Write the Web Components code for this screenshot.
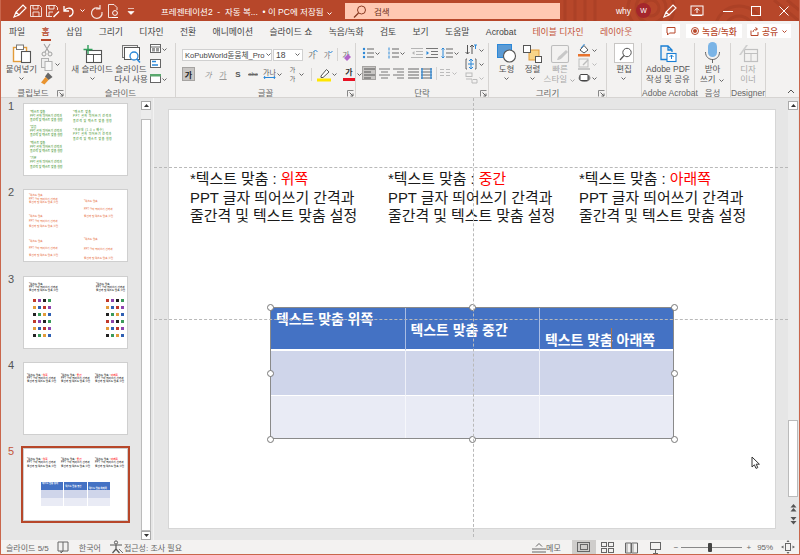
<!DOCTYPE html>
<html lang="ko">
<head>
<meta charset="utf-8">
<title>PowerPoint</title>
<style>
    html, body { margin: 0; padding: 0; background: #e6e6e6; }
    body { font-family: "Liberation Sans", "Noto Sans CJK KR", sans-serif; }
</style>
</head>
<body>
<ppt-app></ppt-app>

<script>
// small helper so each class keeps its own template
function tpl(html) {
    const t = document.createElement('template');
    t.innerHTML = html;
    return t;
}
const FONT = '"Liberation Sans", "Noto Sans CJK KR", sans-serif';

const ICONS = {
    // title bar
    quill: '<path d="M2 14 L4 9 L11 2 L14 5 L7 12 Z M4 9 L7 12 M2 14 L4.5 13" fill="none" stroke="#fff" stroke-width="1.2"/>',
    save: '<path d="M2.5 2.5 H11.5 L13.5 4.5 V13.5 H2.5 Z" fill="none" stroke="#fff" stroke-opacity=".8"/><path d="M5 2.5 V6 H10 V2.5 M5 13.5 V9 H11 V13.5" fill="none" stroke="#fff" stroke-opacity=".8"/>',
    saveas: '<path d="M8 13.5 H2.5 V2.5 H11.5 L13.5 4.5 V7 M5 3 V6 H10 V3 M5 13 V9 H9" fill="none" stroke="#fff" stroke-opacity=".85"/><path d="M9 13.5 L14.5 8 L15.5 9 L10 14.5 Z" fill="#fff"/>',
    undo: '<path d="M4 3 V8 H9 M4.5 7.5 C7 4 13 4.5 13 9 C13 11.5 11 13 9 13.5" fill="none" stroke="#fff" stroke-width="1.3"/>',
    redo: '<path d="M11 2 V6 H7 M10.5 5.5 A5.3 5.3 0 1 0 13 9" fill="none" stroke="#fff" stroke-opacity=".85" stroke-width="1.2"/>',
    fileq: '<path d="M3.5 1.5 H9 L12 4.5 V7 M3.5 1.5 V14.5 H7" fill="none" stroke="#fff" stroke-opacity=".85"/><circle cx="10" cy="10" r="2.4" fill="none" stroke="#fff"/><path d="M7 14.5 H13" stroke="#fff"/>',
    more: '<path d="M4 4.5 H10 M4 7.5 H10 L7 10.5 Z" fill="#fff" stroke="#fff" stroke-opacity=".8" stroke-width=".8"/>',
    search: '<circle cx="9.5" cy="6" r="4" fill="none" stroke="#8a3a22"/><path d="M6.5 9 L2 13.5" stroke="#8a3a22" stroke-width="1.2"/>',
    monitor: '<rect x="2" y="3" width="12" height="9" fill="none" stroke="#fff"/><path d="M8 10 V5.5 M5.8 7.5 L8 5.2 L10.2 7.5" fill="none" stroke="#fff"/><path d="M3 12.5 H13" stroke="#fff"/>',
    // ribbon, clipboard
    paste: '<rect x="1.5" y="3.5" width="13" height="14" fill="#fff" stroke="#e39c3a" stroke-width="1.4"/><rect x="4.5" y="1" width="7" height="4.5" fill="#fff" stroke="#777"/><rect x="9.5" y="7.5" width="9" height="11" fill="#fff" stroke="#555" stroke-width="1.1"/>',
    cut: '<path d="M4 1 L9 9 M10 1 L5 9" stroke="#a0a0a0" stroke-width="1.1"/><circle cx="4" cy="11" r="2" fill="none" stroke="#a0a0a0"/><circle cx="10" cy="11" r="2" fill="none" stroke="#a0a0a0"/>',
    copy: '<rect x="1.5" y="1.5" width="7" height="9" fill="#eee" stroke="#b0b0b0"/><rect x="5" y="4.5" width="7" height="9" fill="#f7f7f7" stroke="#b0b0b0"/>',
    brush: '<path d="M8 1.5 L12.5 6 L8.5 9 L5 5.5 Z" fill="#666"/><path d="M5.5 6 L8.5 9 L4.5 13.5 L1 11.5 Z" fill="#e8932f"/>',
    // slides
    newslide: '<rect x="3.5" y="5.5" width="15" height="12" fill="#fff" stroke="#555" stroke-width="1.1"/><path d="M3.5 9.5 H18.5 M10.5 9.5 V17.5" stroke="#555"/><path d="M5 0 V9 M0.5 4.5 H9.5" stroke="#2f9e5a" stroke-width="1.4"/>',
    reuse: '<rect x="1.5" y="1.5" width="15" height="12" fill="#f3f2f1" stroke="#777"/><rect x="3.5" y="3.5" width="15" height="12" fill="#fff" stroke="#555"/><circle cx="13" cy="12" r="4" fill="#fff" stroke="#2b88d8" stroke-width="1.3"/><path d="M15.8 15 L19 18.5" stroke="#2b88d8" stroke-width="1.6"/>',
    layout: '<rect x=".5" y=".5" width="10" height="8" fill="#fff" stroke="#666"/><path d="M.5 3 H10.5" stroke="#666"/><rect x="2" y="4" width="3" height="3.5" fill="#999"/><rect x="6" y="4" width="3" height="3.5" fill="#999"/>',
    resetsl: '<rect x=".5" y=".5" width="10" height="8" fill="#fff" stroke="#666"/><path d="M2 2.5 H6 M2 6 H8" stroke="#2b88d8" stroke-width="1.3"/>',
    section: '<rect x=".5" y=".5" width="10" height="8" fill="#fff" stroke="#666"/><rect x="0" y="0" width="11" height="2.5" fill="#5aa86e"/>',
    // font
    grow: '<path d="M7.5 3 L9.5 1 L11.5 3" fill="none" stroke="#2b88d8"/>',
    shrink: '<path d="M7.5 1 L9.5 3 L11.5 1" fill="none" stroke="#2b88d8"/>',
    erase: '<path d="M6 9 L10 5 L13 8 L9 12 Z" fill="#b366c9"/>',
    highlight: '<path d="M4 9 L9.5 2.5 L12 5 L6 10.5 H4 Z" fill="#fff" stroke="#555"/><rect x="0" y="11.5" width="14" height="3" fill="#ffe600"/>',
    spacing: '<path d="M0 9.5 H11 M1 8 L0 9.5 L1 11 M10 8 L11 9.5 L10 11" fill="none" stroke="#2b88d8"/>',
    // paragraph
    bullets: '<circle cx="2" cy="2" r="1.2" fill="#2b88d8"/><circle cx="2" cy="6" r="1.2" fill="#2b88d8"/><circle cx="2" cy="10" r="1.2" fill="#2b88d8"/><path d="M5 2 H12 M5 6 H12 M5 10 H12" stroke="#666"/>',
    numbers: '<path d="M2 .5 V3.5 M2 4.5 V7.5 M2 8.5 V11.5" stroke="#2b88d8"/><path d="M5 2 H12 M5 6 H12 M5 10 H12" stroke="#666"/>',
    indentl: '<path d="M0 1.5 H12 M5 4.5 H12 M5 7.5 H12 M0 10.5 H12" stroke="#b5b5b5"/><path d="M3.5 4 L1 6 L3.5 8 Z" fill="#b5b5b5"/>',
    indentr: '<path d="M0 1.5 H12 M5 4.5 H12 M5 7.5 H12 M0 10.5 H12" stroke="#777"/><path d="M.5 4 L3 6 L.5 8 Z" fill="#2b88d8"/>',
    linesp: '<path d="M5 2 H12 M5 6 H12 M5 10 H12" stroke="#666"/><path d="M2 1 V11 M.5 2.5 L2 1 L3.5 2.5 M.5 9.5 L2 11 L3.5 9.5" fill="none" stroke="#2b88d8"/>',
    textdir: '<path d="M2.5 1 V10 M.5 8 L2.5 10 L4.5 8 M7 10 V1 M5 3 L7 1 L9 3" fill="none" stroke="#555"/><path d="M9 1 H12 M10.5 1 V5" stroke="#2b88d8"/>',
    valign: '<path d="M2 1 H1 V11 H2 M10 1 H11 V11 H10" fill="none" stroke="#666"/><path d="M6 1 V11 M4 3 L6 1 L8 3 M4 9 L6 11 L8 9 M3 6 H9" fill="none" stroke="#2b88d8"/>',
    smart: '<rect x="1" y="1" width="6" height="3.5" fill="none" stroke="#bbb"/><path d="M1 7 H7 V11 H12 V7.5 H8" fill="none" stroke="#bbb"/>',
    alignl: '<path d="M0 1 H11 M0 4 H7 M0 7 H11 M0 10 H7" stroke="#555"/>',
    alignc: '<path d="M0 1 H11 M2 4 H9 M0 7 H11 M2 10 H9" stroke="#777"/>',
    alignr: '<path d="M0 1 H11 M4 4 H11 M0 7 H11 M4 10 H11" stroke="#777"/>',
    alignj: '<path d="M0 1 H11 M0 4 H11 M0 7 H11 M0 10 H11" stroke="#666"/>',
    aligndist: '<path d="M0 1 H11 M0 4 H11 M0 7 H11 M0 10 H11" stroke="#666"/><path d="M1 0 V11 M10 0 V11" stroke="#2b88d8" stroke-width="1.3"/>',
    cols: '<path d="M0 1.5 H4 M0 4.5 H4 M0 7.5 H4 M6 1.5 H10 M6 4.5 H10 M6 7.5 H10" stroke="#bbb"/>',
    // drawing
    shapes: '<rect x=".5" y=".5" width="14" height="13" fill="#5b9bd5" stroke="#2b88d8"/><circle cx="12.5" cy="12" r="6" fill="#fff" stroke="#555" stroke-width="1.1"/>',
    arrange: '<rect x="6" y="5" width="10" height="10" fill="#f8d488" stroke="#e39c3a"/><rect x=".5" y=".5" width="7" height="7" fill="#fff" stroke="#555"/><rect x="12.5" y="11.5" width="6" height="6" fill="#fff" stroke="#555"/>',
    quick: '<rect x=".5" y=".5" width="17" height="17" rx="1.5" fill="none" stroke="#bdbdbd" stroke-width="1.1"/><path d="M6 15 C7 12 8 11 9 10.5 L15 5 L17 7 L11 13 C9.5 14.5 8 15 6 15 Z" fill="#c8c8c8"/>',
    fill: '<path d="M2 6 L6 1.5 L10 6 L6 9 Z" fill="#fff" stroke="#555"/><path d="M6.5 0 L3 4" stroke="#2b88d8"/><rect x="0" y="10" width="12" height="2.5" fill="#e8732d"/>',
    outline: '<rect x="1" y="1" width="9" height="8" fill="none" stroke="#bdbdbd"/><path d="M5 7 L10 2" stroke="#bdbdbd" stroke-width="1.5"/><rect x="0" y="10" width="12" height="2" fill="#c8c8c8"/>',
    effects: '<ellipse cx="6.5" cy="6" rx="6" ry="4" fill="#888"/><rect x="2" y="2.5" width="8" height="6" rx="1" fill="#fff" stroke="#444"/>',
    find: '<circle cx="11" cy="7.5" r="4.2" fill="none" stroke="#555"/><path d="M8 10.5 L4 15" stroke="#555" stroke-width="1.2"/>',
    pdf: '<path d="M9 14.5 H2 V1 H9 L13 5 V7 M9 1 V5 H13" fill="none" stroke="#1a7fd4" stroke-width="1.3"/><rect x="8" y="8.5" width="9" height="8" fill="#fff" stroke="#1a7fd4" stroke-width="1.1"/><path d="M12.5 14 V10 M10.5 12 L12.5 10 L14.5 12" fill="none" stroke="#1a7fd4"/>',
    mic: '<rect x="4" y="0" width="9" height="15" rx="4.5" fill="#7ab4e6"/><path d="M1.5 10 C1.5 20 15.5 20 15.5 10 M8.5 17 V21" fill="none" stroke="#666"/>',
    design: '<rect x="5.5" y="4.5" width="13" height="12" fill="none" stroke="#c0c0c0" stroke-width="1.2"/><path d="M5.5 8.5 H18.5 M12 8.5 V16.5" stroke="#c0c0c0"/><path d="M0 10 L7 0 L9 0 L2 10 Z" fill="#cfcfcf"/>',
    launcher: '<path d="M.5 6.5 V.5 H6.5" fill="none" stroke="#888"/><path d="M2.5 2.5 L6 6 M6 3.5 V6 H3.5" fill="none" stroke="#666"/>',
    // status bar
    book: '<path d="M2 2 H7 V11 H2 Z M7 2 H12 V11 H7 M5 11 V13 L7 11" fill="none" stroke="#666"/>',
    access: '<circle cx="7" cy="2.5" r="1.6" fill="none" stroke="#555"/><path d="M1 5 H13 M7 5 V9 M7 9 L3.5 13 M7 9 L10.5 13" fill="none" stroke="#555" stroke-width="1.2"/><path d="M10 9 L14 13" stroke="#777"/>',
    notes: '<path d="M0 9 H14 M0 12 H14" stroke="#666"/><path d="M4 6.5 L7 3.5 L10 6.5" fill="none" stroke="#666"/>',
    normal: '<rect x=".5" y="1.5" width="12" height="9" fill="none" stroke="#666"/><rect x="3.5" y="3.5" width="7" height="5" fill="none" stroke="#666"/>',
    sorter: '<rect x=".5" y="1.5" width="5" height="4" fill="none" stroke="#666"/><rect x="7.5" y="1.5" width="5" height="4" fill="none" stroke="#666"/><rect x=".5" y="7.5" width="5" height="4" fill="none" stroke="#666"/><rect x="7.5" y="7.5" width="5" height="4" fill="none" stroke="#666"/>',
    reading: '<path d="M.5 2 H6 V12 H.5 Z M6.5 2 H12.5 V12 H6.5 Z" fill="none" stroke="#666"/><path d="M2 2 V12 M8 2 V12" stroke="#999"/>',
    show: '<rect x="1.5" y="1.5" width="10" height="7" fill="none" stroke="#666"/><path d="M6.5 8.5 V12 M4 12.5 H9" stroke="#666"/>',
    fit: '<rect x="4.5" y="3.5" width="5" height="7" fill="none" stroke="#666"/><path d="M7 0 L5.5 2 H8.5 Z M7 14 L5.5 12 H8.5 Z M0 7 L2.5 5.5 V8.5 Z M14 7 L11.5 5.5 V8.5 Z" fill="#666"/>'
};

class RbIcon extends HTMLElement {
    connectedCallback() {
        const w = this.getAttribute('w') || 14;
        const h = this.getAttribute('h') || w;
        this.attachShadow({ mode: 'open' }).innerHTML = `
            <style>:host { display: inline-flex; flex: none; } svg { display: block; overflow: visible; }</style>
            <svg width="${w}" height="${h}" viewBox="0 0 ${w} ${h}">${ICONS[this.getAttribute('name')] || ''}</svg>`;
    }
}
customElements.define('rb-icon', RbIcon);

class RbCaret extends HTMLElement {
    constructor() {
        super();
        this.attachShadow({ mode: 'open' }).innerHTML = `
            <style>:host { display: inline-flex; flex: none; align-items: center; justify-content: center; width: 7px; height: 5px; }</style>
            <svg width="5" height="3" viewBox="0 0 5 3"><path d="M.5 .5 L2.5 2.5 L4.5 .5" fill="none" stroke="var(--caret, #666)"/></svg>`;
    }
}
customElements.define('rb-caret', RbCaret);

// title bar
const titleTemplate = tpl(`
    <style>
        :host {
            display: flex; align-items: center; position: relative; overflow: hidden;
            height: 21px; background: #b7472a; color: #fff; font: 8.5px ${FONT}; flex: none;
        }
        .deco { position: absolute; right: 0; top: 0; }
        .qa { display: flex; align-items: center; margin-left: 11px; position: relative; }
        .name { margin-left: 23px; width: 184px; white-space: pre; position: relative; }
        .search {
            width: 215px; height: 16px; background: #ffc8b2; color: #6b3020; display: flex; align-items: center;
            padding-left: 7px; box-sizing: border-box; gap: 8px; position: relative; font-size: 8.5px;
        }
        .right { display: flex; align-items: center; margin-left: auto; position: relative; }
        .who { margin-right: 5px; }
        .avatar {
            width: 15px; height: 15px; border-radius: 50%; background: #a4262c; font-size: 7px;
            display: flex; align-items: center; justify-content: center; margin-right: 11px;
        }
        .win { width: 28px; display: flex; justify-content: center; }
        rb-caret { --caret: #fff; }
    </style>
    <svg class="deco" width="240" height="21" viewBox="0 0 240 21" fill="none" stroke="#ac4126" stroke-width="3">
        <path d="M6 0 V21 M16 0 V21 M26 0 V21 M36 0 V21"/>
        <circle cx="92" cy="8" r="8"/><circle cx="92" cy="8" r="15"/><circle cx="92" cy="8" r="23"/>
        <circle cx="180" cy="30" r="14"/><circle cx="180" cy="30" r="24"/><path d="M215 0 L240 21 M228 0 L240 10"/>
    </svg>
    <div class="qa">
        <rb-icon name="quill" w="16"></rb-icon>
        <rb-icon name="save" w="16"></rb-icon>
        <rb-icon name="saveas" w="16"></rb-icon>
        <rb-icon name="undo" w="16"></rb-icon><rb-caret style="margin:0 3px"></rb-caret>
        <rb-icon name="redo" w="16"></rb-icon>
        <rb-icon name="fileq" w="16"></rb-icon>
        <rb-icon name="more" w="14" style="margin-left:3px"></rb-icon>
    </div>
    <div class="name">프레젠테이션2  -  자동 복...  • 이 PC에 저장됨 <rb-caret></rb-caret></div>
    <div class="search"><rb-icon name="search" w="14"></rb-icon>검색</div>
    <div class="right">
        <span class="who">why</span>
        <div class="avatar">W</div>
        <rb-icon name="quill" w="16" style="margin-right:11px"></rb-icon>
        <rb-icon name="monitor" w="16" style="margin-right:9px"></rb-icon>
        <div class="win"><svg width="10" height="10"><path d="M0 5.5 H10" stroke="#fff"/></svg></div>
        <div class="win"><svg width="10" height="10"><rect x=".5" y=".5" width="9" height="9" fill="none" stroke="#fff"/></svg></div>
        <div class="win" style="margin-right:1px"><svg width="10" height="10"><path d="M.5 .5 L9.5 9.5 M9.5 .5 L.5 9.5" stroke="#fff"/></svg></div>
    </div>
`);
class PptTitle extends HTMLElement {
    constructor() {
        super();
        this.attachShadow({ mode: 'open' }).appendChild(titleTemplate.content.cloneNode(true));
    }
}
customElements.define('ppt-title', PptTitle);

// tab strip
const tabsTemplate = tpl(`
    <style>
        :host {
            display: flex; align-items: center; height: 21px; background: #f3f2f1; flex: none;
            font: 8.8px ${FONT}; color: #444; padding-left: 8px; gap: 16.4px; position: relative;
        }
        .home { color: #b7472a; position: relative; font-weight: 500; }
        .home::after { content: ""; position: absolute; left: -1px; right: -1px; bottom: -3px; height: 2px; background: #b7472a; }
        .ctx { color: #c4553a; }
        .btns { position: absolute; right: 8px; top: 3px; display: flex; gap: 5px; }
        .btn {
            height: 14px; background: #fff; display: flex; align-items: center; justify-content: center; gap: 3px;
            color: #b7472a; font-weight: 500; box-sizing: border-box;
        }
        .rec { width: 56px; }
        .share { width: 44px; }
        .chat { width: 18px; margin-right: 1px; }
        rb-caret { --caret: #b7472a; }
    </style>
    <span>파일</span><span class="home">홈</span><span>삽입</span><span>그리기</span><span>디자인</span><span>전환</span>
    <span>애니메이션</span><span>슬라이드 쇼</span><span>녹음/녹화</span><span>검토</span><span>보기</span><span>도움말</span>
    <span>Acrobat</span><span class="ctx">테이블 디자인</span><span class="ctx">레이아웃</span>
    <div class="btns">
        <div class="btn chat"><svg width="10" height="9"><path d="M1 .5 H9 V6 H3.5 L1.5 8 V6 H1 Z" fill="none" stroke="#b7472a"/></svg></div>
        <div class="btn rec"><svg width="8" height="8"><circle cx="4" cy="4" r="3.5" fill="none" stroke="#b7472a"/><circle cx="4" cy="4" r="2" fill="#b7472a"/></svg>녹음/녹화</div>
        <div class="btn share"><svg width="9" height="9"><path d="M1 3.5 V8.5 H8 V5 M3 5 C3 3 5 2 7 2 M5.5 .5 L7.5 2 L5.5 3.5" fill="none" stroke="#b7472a"/></svg>공유 <rb-caret></rb-caret></div>
    </div>
`);
class PptTabs extends HTMLElement {
    constructor() {
        super();
        this.attachShadow({ mode: 'open' }).appendChild(tabsTemplate.content.cloneNode(true));
    }
}
customElements.define('ppt-tabs', PptTabs);

// one group of the ribbon: content in the slot, name and dialog launcher below
class RbGroup extends HTMLElement {
    connectedCallback() {
        const launcher = this.hasAttribute('launcher')
            ? '<rb-icon class="launch" name="launcher" w="7"></rb-icon>' : '';
        this.attachShadow({ mode: 'open' }).innerHTML = `
            <style>
                :host {
                    display: flex; flex-direction: column; flex: none; box-sizing: border-box; height: 55px;
                    width: ${this.getAttribute('w')}px; border-right: 1px solid #d6d4d2;
                }
                .body { flex: 1; display: flex; min-height: 0; }
                .label { height: 12px; line-height: 15px; text-align: center; color: #666; font-size: 8.5px; position: relative; white-space: nowrap; }
                .launch { position: absolute; right: 1px; top: 4px; }
            </style>
            <div class="body"><slot></slot></div>
            <div class="label">${this.getAttribute('label')}${launcher}</div>`;
    }
}
customElements.define('rb-group', RbGroup);

// big ribbon button: icon above, one or two lines of text
class RbBig extends HTMLElement {
    connectedCallback() {
        const caret = this.hasAttribute('caret') ? '<rb-caret></rb-caret>' : '';
        this.attachShadow({ mode: 'open' }).innerHTML = `
            <style>
                :host {
                    display: flex; flex-direction: column; align-items: center; flex: none;
                    width: ${this.getAttribute('w') || 40}px; color: ${this.hasAttribute('off') ? '#aaa' : '#555'};
                    --caret: ${this.hasAttribute('off') ? '#aaa' : '#666'};
                    font-size: 8.5px; line-height: 10px; text-align: center; white-space: nowrap;
                }
                .ico { height: 20px; display: flex; align-items: flex-end; justify-content: center; width: 100%; }
                .txt { display: flex; flex-direction: column; align-items: center; padding-top: 1px; }
                rb-caret { margin-top: 2px; }
            </style>
            <div class="ico"><slot name="icon"></slot></div>
            <div class="txt"><slot></slot>${caret}</div>`;
    }
}
customElements.define('rb-big', RbBig);

// small ribbon button: icon and optional caret
class RbSmall extends HTMLElement {
    connectedCallback() {
        const caret = this.hasAttribute('caret') ? '<rb-caret></rb-caret>' : '';
        const w = this.getAttribute('w');
        this.attachShadow({ mode: 'open' }).innerHTML = `
            <style>
                :host {
                    display: flex; align-items: center; flex: none; height: 14px; color: #666;
                    ${w ? `width:${w}px;` : ''}
                }
                :host([on]) { background: #c8c6c4; box-shadow: inset 0 0 0 1px #a5a3a1; justify-content: center; color: #222; }
                :host([off]) { --caret: #bbb; }
            </style>
            <slot></slot>${caret}`;
    }
}
customElements.define('rb-small', RbSmall);

// everything in the home ribbon
const ribbonTemplate = tpl(`
    <style>
        :host {
            display: flex; flex: none; height: 56px; background: #f3f2f1; position: relative;
            font: 8.5px ${FONT}; color: #555; border-bottom: 1px solid #d6d4d2; box-sizing: border-box; padding-top: 1px;
        }
        .col { display: flex; flex-direction: column; }
        .row { display: flex; align-items: center; }
        .combo {
            height: 12px; background: #fff; border: 1px solid #d0d0d0; box-sizing: border-box; display: flex;
            align-items: center; justify-content: space-between; padding: 0 1px 0 2px; font-size: 7.6px; color: #444; white-space: nowrap; overflow: hidden;
        }
        .g { font-size: 8px; color: #777; text-align: center; font-weight: 400; }
        .box { width: 20px; height: 20px; background: #fff; border: 1px solid #c8c6c4; display: flex; align-items: center; justify-content: center; box-sizing: border-box; }
        .collapse { position: absolute; right: 4px; bottom: 3px; }
        .sep { width: 1px; height: 13px; background: #d6d4d2; }
        .bar { display: block; }
    </style>
    <rb-group w="65" label="클립보드" launcher>
        <rb-big w="35" caret style="margin-left:3px"><rb-icon slot="icon" name="paste" w="20" h="19"></rb-icon>붙여넣기</rb-big>
        <div class="col">
            <rb-small style="padding-left:1px"><rb-icon name="cut" w="14"></rb-icon></rb-small>
            <rb-small caret style="padding-left:1px"><rb-icon name="copy" w="14"></rb-icon></rb-small>
            <rb-small style="padding-left:1px"><rb-icon name="brush" w="14"></rb-icon></rb-small>
        </div>
    </rb-group>
    <rb-group w="110" label="슬라이드">
        <rb-big w="46" caret style="margin-left:3px"><rb-icon slot="icon" name="newslide" w="19" h="18"></rb-icon>새 슬라이드</rb-big>
        <rb-big w="32"><rb-icon slot="icon" name="reuse" w="20" h="19"></rb-icon>슬라이드<br>다시 사용</rb-big>
        <div class="col" style="padding:0 0 0 3px;gap:1px;margin-top:-1px">
            <rb-small caret><rb-icon name="layout" w="11" h="10"></rb-icon></rb-small>
            <rb-small><rb-icon name="resetsl" w="11" h="10"></rb-icon></rb-small>
            <rb-small caret><rb-icon name="section" w="11" h="10"></rb-icon></rb-small>
        </div>
    </rb-group>
    <rb-group w="180" label="글꼴" launcher>
        <div class="col" style="padding:5px 0 0 6px;gap:6px">
            <div class="row">
                <div class="combo" style="width:90px"><span>KoPubWorld돋움체_Pro</span><rb-caret></rb-caret></div>
                <div class="combo" style="width:30px;margin-left:1px;font-size:8.5px"><span>18</span><rb-caret></rb-caret></div>
                <span class="g" style="width:10px;margin-left:4px;position:relative">가<rb-icon name="grow" w="12" h="4" style="position:absolute;left:-1px;top:0"></rb-icon></span>
                <span class="g" style="width:10px;margin-left:5px;font-size:7px;position:relative">가<rb-icon name="shrink" w="12" h="4" style="position:absolute;left:-1px;top:0"></rb-icon></span>
                <span class="sep" style="margin-left:5px"></span>
                <span class="g" style="width:10px;margin-left:3px;position:relative">가<rb-icon name="erase" w="14" style="position:absolute;left:-3px;top:0"></rb-icon></span>
            </div>
            <div class="row">
                <rb-small on w="13"><span style="font-weight:700;font-size:8px">가</span></rb-small>
                <span class="g" style="width:8px;margin-left:9px;font-style:italic;color:#999">가</span>
                <span class="g" style="width:8px;margin-left:7px;text-decoration:underline;color:#999">가</span>
                <span class="g" style="width:8px;margin-left:7px;font-weight:700;color:#555">S</span>
                <span class="g" style="width:12px;margin-left:5px;text-decoration:line-through;font-size:6px;color:#666">abc</span>
                <rb-small caret style="margin-left:4px;position:relative"><span class="g" style="width:13px;font-size:7px;line-height:8px;margin-top:-3px;color:#555">가나</span><rb-icon name="spacing" w="11" h="12" style="position:absolute;left:1px;top:1px"></rb-icon></rb-small>
                <rb-small caret style="margin-left:4px"><span class="g" style="width:11px;font-size:6px;color:#555">가가</span></rb-small>
                <span class="sep" style="margin-left:6px"></span>
                <rb-small caret style="margin-left:5px"><rb-icon name="highlight" w="14" h="14"></rb-icon></rb-small>
                <rb-small caret style="margin-left:4px"><span style="display:flex;flex-direction:column;align-items:center;width:14px;line-height:10px;font-size:8px;font-weight:700;color:#333">가<svg class="bar" width="12" height="3"><rect width="12" height="3" fill="#e81123"></rect></svg></span></rb-small>
            </div>
        </div>
    </rb-group>
    <rb-group w="133" label="단락" launcher>
        <div class="col" style="padding:3px 0 0 6px;gap:6px;width:103px">
            <div class="row">
                <rb-small caret w="25"><rb-icon name="bullets" w="12"></rb-icon></rb-small>
                <rb-small caret w="24"><rb-icon name="numbers" w="12"></rb-icon></rb-small>
                <rb-small w="15"><rb-icon name="indentl" w="12"></rb-icon></rb-small>
                <rb-small w="15"><rb-icon name="indentr" w="12"></rb-icon></rb-small>
                <rb-small caret w="22"><rb-icon name="linesp" w="12"></rb-icon></rb-small>
            </div>
            <div class="row">
                <rb-small on w="14"><rb-icon name="alignl" w="11" h="11"></rb-icon></rb-small>
                <rb-small w="15" style="padding-left:3px;box-sizing:border-box"><rb-icon name="alignc" w="11" h="11"></rb-icon></rb-small>
                <rb-small w="15" style="padding-left:2px;box-sizing:border-box"><rb-icon name="alignr" w="11" h="11"></rb-icon></rb-small>
                <rb-small w="15" style="padding-left:2px;box-sizing:border-box"><rb-icon name="alignj" w="11" h="11"></rb-icon></rb-small>
                <rb-small w="13"><rb-icon name="aligndist" w="11" h="11"></rb-icon></rb-small>
                <span class="sep" style="margin:0 3px 0 2px"></span>
                <rb-small caret w="20" off><rb-icon name="cols" w="11" h="11"></rb-icon></rb-small>
            </div>
        </div>
        <div class="col">
            <rb-small caret><rb-icon name="textdir" w="13" h="12"></rb-icon></rb-small>
            <rb-small caret><rb-icon name="valign" w="13" h="12"></rb-icon></rb-small>
            <rb-small caret off><rb-icon name="smart" w="13" h="12"></rb-icon></rb-small>
        </div>
    </rb-group>
    <rb-group w="118" label="그리기" launcher>
        <rb-big w="27" caret style="margin-left:4px"><rb-icon slot="icon" name="shapes" w="19" h="19"></rb-icon>도형</rb-big>
        <rb-big w="25" caret><rb-icon slot="icon" name="arrange" w="19" h="18"></rb-icon>정렬</rb-big>
        <rb-big w="30" off><rb-icon slot="icon" name="quick" w="18" h="18"></rb-icon>빠른<br><span>스타일 <rb-caret></rb-caret></span></rb-big>
        <div class="col" style="padding:0 0 0 3px">
            <rb-small caret><rb-icon name="fill" w="13" h="13"></rb-icon></rb-small>
            <rb-small caret off><rb-icon name="outline" w="13" h="13"></rb-icon></rb-small>
            <rb-small caret><rb-icon name="effects" w="13" h="13"></rb-icon></rb-small>
        </div>
    </rb-group>
    <rb-group w="35" label="">
        <rb-big w="34" caret>
            <div slot="icon" class="box"><rb-icon name="find" w="16"></rb-icon></div>
            <span>편집</span>
        </rb-big>
    </rb-group>
    <rb-group w="53" label="Adobe Acrobat">
        <rb-big w="52"><rb-icon slot="icon" name="pdf" w="18" h="18"></rb-icon>Adobe PDF<br>작성 및 공유</rb-big>
    </rb-group>
    <rb-group w="36" label="음성">
        <rb-big w="35"><rb-icon slot="icon" name="mic" w="17" h="21"></rb-icon>받아<br><span>쓰기 <rb-caret></rb-caret></span></rb-big>
    </rb-group>
    <rb-group w="35" label="Designer">
        <rb-big w="34" off><rb-icon slot="icon" name="design" w="19" h="18"></rb-icon>디자<br>이너</rb-big>
    </rb-group>
    <svg class="collapse" width="8" height="5"><path d="M1 4 L4 1 L7 4" fill="none" stroke="#555"/></svg>
`);
class PptRibbon extends HTMLElement {
    constructor() {
        super();
        this.attachShadow({ mode: 'open' }).appendChild(ribbonTemplate.content.cloneNode(true));
    }
}
customElements.define('ppt-ribbon', PptRibbon);

// vertical scrollbar; the slot fills the lower end
const scrollTemplate = tpl(`
    <style>
        :host { display: flex; flex-direction: column; box-sizing: border-box; width: 10px; background: #e6e6e6; flex: none; }
        .arrow {
            height: 9px; background: #fff; border: 1px solid #aaa; box-sizing: border-box; flex: none;
            display: flex; align-items: center; justify-content: center;
        }
        .gap { flex: none; height: calc(var(--before, 0) * 1px); background: #ececec; }
        .thumb { flex: none; height: calc(var(--size, 1) * 1px); background: #fff; border: 1px solid #bbb; box-sizing: border-box; }
        .after { flex: 1; display: flex; flex-direction: column; justify-content: flex-end; }
    </style>
    <div class="arrow"><svg width="5" height="3"><path d="M2.5 0 L5 3 H0 Z" fill="#333"/></svg></div>
    <div class="gap"></div>
    <div class="thumb"></div>
    <div class="after"><slot></slot></div>
`);
class PptScroll extends HTMLElement {
    constructor() {
        super();
        this.attachShadow({ mode: 'open' }).appendChild(scrollTemplate.content.cloneNode(true));
    }
}
customElements.define('ppt-scroll', PptScroll);

// text on a thumbnail, which is a free canvas
class MiniText extends HTMLElement {
    connectedCallback() {
        this.attachShadow({ mode: 'open' }).innerHTML = `
            <style>
                :host {
                    position: absolute; left: ${this.getAttribute('x')}px; top: ${this.getAttribute('y')}px;
                    font-size: ${this.getAttribute('fs') || 2.6}px; line-height: ${this.getAttribute('lh') || 3.3}px; white-space: nowrap;
                    letter-spacing: ${this.getAttribute('ls') || 0}px; font-weight: 500;
                    color: ${this.getAttribute('color') || '#222'}; font-family: ${FONT};
                }
            </style><slot></slot>`;
    }
}
customElements.define('mini-text', MiniText);

class SlideThumb extends HTMLElement {
    connectedCallback() {
        this.attachShadow({ mode: 'open' }).innerHTML = `
            <style>
                :host { display: flex; height: 73px; }
                .num { width: 22px; padding-left: 7px; box-sizing: border-box; font-size: 11px; line-height: 7px; color: #555; }
                :host([active]) .num { color: #c4553a; }
                .page { position: relative; width: 105px; height: 73px; box-sizing: border-box; background: #fff; border: 1px solid #cfcfcf; overflow: hidden; }
                .wrap { position: relative; }
                :host([active]) .wrap::after {
                    content: ""; position: absolute; left: -2px; top: -2px; width: 109px; height: 77px;
                    border: 2px solid #b7472a; box-sizing: border-box;
                }
            </style>
            <div class="num">${this.getAttribute('num')}</div>
            <div class="wrap"><div class="page"><slot></slot></div></div>`;
    }
}
customElements.define('slide-thumb', SlideThumb);

// little colour swatch rows in thumbnail 3
class MiniDots extends HTMLElement {
    connectedCallback() {
        const colors = ['#c0392b', '#2f5fb3', '#e39c3a', '#3a9a5a', '#222', '#8e44ad'];
        let dots = '';
        for (let i = 0; i < 24; i++) dots += `<i style="background:${colors[(i * 5) % 6]}"></i>`;
        this.attachShadow({ mode: 'open' }).innerHTML = `
            <style>
                :host {
                    position: absolute; left: ${this.getAttribute('x')}px; top: ${this.getAttribute('y')}px;
                    display: grid; grid-template-columns: repeat(4, 3px); gap: 4px 2px;
                }
                i { display: block; width: 3px; height: 3px; }
            </style>${dots}`;
    }
}
customElements.define('mini-dots', MiniDots);

class MiniTable extends HTMLElement {
    constructor() {
        super();
        this.attachShadow({ mode: 'open' }).innerHTML = `
            <style>
                :host {
                    position: absolute; left: 17px; top: 33px; width: 70px; height: 24px;
                    display: grid; grid-template-columns: repeat(3, 1fr); grid-template-rows: 8px 8px 8px;
                    font: 700 2.3px/3px ${FONT}; color: #fff; white-space: nowrap;
                }
                div { background: #4472c4; border-right: .3px solid #fff; padding: 0 1px; overflow: hidden; }
                .a { background: #cfd5ea; } .b { background: #e9ebf5; }
            </style>
            <div>텍스트 맞춤 위쪽</div><div style="padding-top:2.5px">텍스트 맞춤 중간</div><div style="padding-top:5px">텍스트 맞춤 아래쪽</div>
            <div class="a"></div><div class="a"></div><div class="a"></div>
            <div class="b"></div><div class="b"></div><div class="b"></div>`;
    }
}
customElements.define('mini-table', MiniTable);

const BODY = 'PPT 글자 띄어쓰기 간격과<br>줄간격 및 텍스트 맞춤 설정';
function alignBlocks(y) {
    return [['위쪽', 3], ['중간', 37], ['아래쪽', 71]].map(([w, x]) =>
        `<mini-text x="${x}" y="${y}">*텍스트 맞춤 : <span style="color:#f00">${w}</span><br>${BODY}</mini-text>`).join('');
}

const thumbsTemplate = tpl(`
    <style>
        :host { display: flex; flex-direction: column; gap: 13.25px; padding-top: 5px; box-sizing: border-box; width: 140px; overflow: hidden; background: #e6e6e6; flex: none; }
    </style>
    <slide-thumb num="1">
        <mini-text x="6" y="6" color="#4f9a3a" fs="2.9" lh="4">*텍스트 맞춤<br>${BODY}</mini-text>
        <mini-text x="6" y="21" color="#4f9a3a" fs="2.9" lh="4">*없음<br>${BODY}</mini-text>
        <mini-text x="6" y="37" color="#4f9a3a" fs="2.9" lh="4">*텍스트 맞춤<br>${BODY}</mini-text>
        <mini-text x="6" y="52" color="#4f9a3a" fs="2.9" lh="4.4">*기본<br>${BODY}</mini-text>
        <mini-text x="49" y="6" color="#4f9a3a" fs="2.9" lh="4.4" ls=".45">*텍스트 맞춤<br>${BODY}</mini-text>
        <mini-text x="49" y="24" color="#4f9a3a" fs="2.9" lh="4.4" ls=".45">*가운데 (1.0 x 배수)<br>${BODY}</mini-text>
    </slide-thumb>
    <slide-thumb num="2">
        <mini-text x="5" y="4" color="#e8754a">*텍스트 맞춤<br>${BODY}</mini-text>
        <mini-text x="5" y="24" color="#e8754a" lh="5">*텍스트 맞춤<br>${BODY}</mini-text>
        <mini-text x="5" y="49" color="#e8754a" lh="6.7">*텍스트 맞춤<br>${BODY}</mini-text>
        <mini-text x="60" y="8" color="#e8754a" lh="7.5">*텍스트 맞춤<br>${BODY}</mini-text>
        <mini-text x="60" y="45" color="#e8754a" lh="9.5">*텍스트 맞춤<br>${BODY}</mini-text>
    </slide-thumb>
    <slide-thumb num="3">
        <mini-text x="5" y="6">*텍스트 맞춤<br>${BODY}</mini-text>
        <mini-text x="72" y="6">*텍스트 맞춤<br>${BODY}</mini-text>
        <mini-dots x="9" y="22"></mini-dots>
        <mini-dots x="82" y="22"></mini-dots>
    </slide-thumb>
    <slide-thumb num="4">${alignBlocks(11)}</slide-thumb>
    <slide-thumb num="5" active>${alignBlocks(9)}<mini-table></mini-table></slide-thumb>
`);
class PptThumbs extends HTMLElement {
    constructor() {
        super();
        this.attachShadow({ mode: 'open' }).appendChild(thumbsTemplate.content.cloneNode(true));
    }
}
customElements.define('ppt-thumbs', PptThumbs);

// text box placed on the slide canvas
class SlideText extends HTMLElement {
    connectedCallback() {
        this.attachShadow({ mode: 'open' }).innerHTML = `
            <style>
                :host {
                    position: absolute; left: ${this.getAttribute('x')}px; top: 60px; white-space: nowrap;
                    font: 14.9px/18.6px ${FONT}; color: #1a1a1a;
                }
                b { font-weight: 400; color: #f00; }
            </style>
            *텍스트 맞춤 : <b>${this.getAttribute('where')}</b><br>
            PPT 글자 띄어쓰기 간격과<br>줄간격 및 텍스트 맞춤 설정`;
    }
}
customElements.define('slide-text', SlideText);

// selected table with its sizing handles
const tableTemplate = tpl(`
    <style>
        :host {
            position: absolute; left: 101px; top: 197px; width: 404px; height: 132px; box-sizing: border-box;
            font: 700 13.9px/16px ${FONT}; color: #fff;
        }
        .grid {
            display: grid; grid-template-columns: 134.5px 134.5px 1fr; grid-template-rows: 43px 45px 1fr;
            height: 100%; box-sizing: border-box; border: 1px solid #8a8a8a; white-space: nowrap;
        }
        .c { border-right: 1px solid #fff; box-sizing: border-box; padding: 0 5px; display: flex; }
        .c:nth-child(3n) { border-right: 0; }
        .h { background: #4472c4; border-right-color: #a9bce3; border-bottom: 2px solid #fff; }
        .a { background: #cfd5ea; border-bottom: 1px solid #fff; border-right-color: #eef0f8; }
        .b { background: #e9ebf5; border-right-color: #f6f7fb; }
        .caret { position: absolute; left: 341px; top: 21px; width: 1px; height: 21px; background: #a8764a; }
        i {
            position: absolute; width: 7px; height: 7px; border-radius: 50%; background: #fff; border: 1px solid #777;
            box-sizing: border-box; margin: -3.5px 0 0 -3.5px;
        }
    </style>
    <div class="grid">
        <div class="c h" style="align-items:flex-start;padding-top:3px">텍스트 맞춤 위쪽</div>
        <div class="c h" style="align-items:center;padding-top:2px">텍스트 맞춤 중간</div>
        <div class="c h" style="align-items:flex-end;padding-bottom:1px">텍스트 맞춤 아래쪽</div>
        <div class="c a"></div><div class="c a"></div><div class="c a"></div>
        <div class="c b"></div><div class="c b"></div><div class="c b"></div>
    </div>
    <div class="caret"></div>
    <i style="left:0;top:0"></i><i style="left:50%;top:0"></i><i style="left:100%;top:0"></i>
    <i style="left:0;top:50%"></i><i style="left:100%;top:50%"></i>
    <i style="left:0;top:100%"></i><i style="left:50%;top:100%"></i><i style="left:100%;top:100%"></i>
`);
class SlideTable extends HTMLElement {
    constructor() {
        super();
        this.attachShadow({ mode: 'open' }).appendChild(tableTemplate.content.cloneNode(true));
    }
}
customElements.define('slide-table', SlideTable);

// the edit pane: gray area, white slide, drawing guides over it
const canvasTemplate = tpl(`
    <style>
        :host { display: block; position: relative; flex: 1; background: #e6e6e6; padding: 12px 0 0 15px; box-sizing: border-box; overflow: hidden; border-left: 1px solid #f2f2f2; }
        .slide { position: relative; width: 606px; height: 418px; background: #fff; box-shadow: 0 0 0 1px #d6d6d6; }
        .gh { position: absolute; left: 0; right: 0; height: 0; border-top: 1px dashed #b9b9b9; }
        .gv { position: absolute; top: 0; bottom: 3px; left: 319px; width: 0; border-left: 1px dashed #b9b9b9; }
        .pointer { position: absolute; left: 597px; top: 358px; }
    </style>
    <div class="slide">
        <slide-text x="21" where="위쪽"></slide-text>
        <slide-text x="219" where="중간"></slide-text>
        <slide-text x="410" where="아래쪽"></slide-text>
        <slide-table></slide-table>
    </div>
    <div class="gh" style="top:69px"></div>
    <div class="gh" style="top:221px"></div>
    <div class="gv"></div>
    <svg class="pointer" width="10" height="14"><path d="M1 1 V11 L3.4 8.8 L5 12.4 L6.8 11.6 L5.2 8.2 H8.4 Z" fill="#fff" stroke="#333"/></svg>
`);
class PptCanvas extends HTMLElement {
    constructor() {
        super();
        this.attachShadow({ mode: 'open' }).appendChild(canvasTemplate.content.cloneNode(true));
    }
}
customElements.define('ppt-canvas', PptCanvas);

// status bar
const statusTemplate = tpl(`
    <style>
        :host {
            display: flex; align-items: center; height: 14px; flex: none; background: #f3f2f1; color: #666;
            font: 8px ${FONT}; padding-left: 5px; box-sizing: border-box; white-space: nowrap;
        }
        .view { width: 24px; height: 14px; display: flex; align-items: center; justify-content: center; }
        .view.on { background: #cfcdcb; }
        .slider { width: 61px; height: 1px; background: #888; position: relative; margin: 0 4px 0 3px; }
        .slider::after { content: ""; position: absolute; left: 27px; top: -4px; width: 4px; height: 9px; background: #444; border-radius: 1px; }
    </style>
    <span>슬라이드 5/5</span>
    <rb-icon name="book" w="14" style="margin-left:7px"></rb-icon>
    <span style="margin-left:9px">한국어</span>
    <rb-icon name="access" w="14" style="margin-left:8px"></rb-icon>
    <span style="margin-left:1px">접근성: 조사 필요</span>
    <rb-icon name="notes" w="14" style="margin-left:350px"></rb-icon>
    <span>메모</span>
    <div class="view on" style="margin-left:11px"><rb-icon name="normal" w="13"></rb-icon></div>
    <div class="view"><rb-icon name="sorter" w="13"></rb-icon></div>
    <div class="view"><rb-icon name="reading" w="13"></rb-icon></div>
    <div class="view"><rb-icon name="show" w="13"></rb-icon></div>
    <span style="margin-left:6px">−</span>
    <div class="slider"></div>
    <span>+</span>
    <span style="margin-left:6px">95%</span>
    <rb-icon name="fit" w="14" style="margin-left:8px"></rb-icon>
`);
class PptStatus extends HTMLElement {
    constructor() {
        super();
        this.attachShadow({ mode: 'open' }).appendChild(statusTemplate.content.cloneNode(true));
    }
}
customElements.define('ppt-status', PptStatus);

// the whole window
const appTemplate = tpl(`
    <style>
        :host {
            display: flex; flex-direction: column; width: 800px; height: 555px; box-sizing: border-box;
            border: 1px solid #c9664c; border-top: 0; overflow: hidden; font-family: ${FONT};
        }
        .main { flex: 1; display: flex; min-height: 0; background: #e6e6e6; }
        .side { padding: 3px 2px 0 0; display: flex; box-sizing: border-box; flex: none; }
        .down {
            height: 9px; background: #fff; border: 1px solid #aaa; box-sizing: border-box;
            display: flex; align-items: center; justify-content: center;
        }
        .nav { display: flex; flex-direction: column; gap: 5px; padding: 0 0 15px; align-items: center; }
    </style>
    <ppt-title></ppt-title>
    <ppt-tabs></ppt-tabs>
    <ppt-ribbon></ppt-ribbon>
    <div class="main">
        <ppt-thumbs></ppt-thumbs>
        <div class="side"><ppt-scroll style="--before:9;--size:412">
            <div class="down"><svg width="5" height="3"><path d="M0 0 H5 L2.5 3 Z" fill="#333"/></svg></div>
        </ppt-scroll></div>
        <ppt-canvas></ppt-canvas>
        <div class="side" style="padding:3px 0 0 0;width:11px"><ppt-scroll style="--before:310;--size:77">
            <div class="nav">
                <svg width="7" height="8"><path d="M3.5 0 L6.5 3.5 H.5 Z M3.5 4 L6.5 7.5 H.5 Z" fill="#555"/></svg>
                <svg width="7" height="8"><path d="M.5 0 H6.5 L3.5 3.5 Z M.5 4 H6.5 L3.5 7.5 Z" fill="#555"/></svg>
            </div>
        </ppt-scroll></div>
    </div>
    <ppt-status></ppt-status>
`);
class PptApp extends HTMLElement {
    constructor() {
        super();
        this.attachShadow({ mode: 'open' }).appendChild(appTemplate.content.cloneNode(true));
    }
}
customElements.define('ppt-app', PptApp);
</script>
</body>
</html>
